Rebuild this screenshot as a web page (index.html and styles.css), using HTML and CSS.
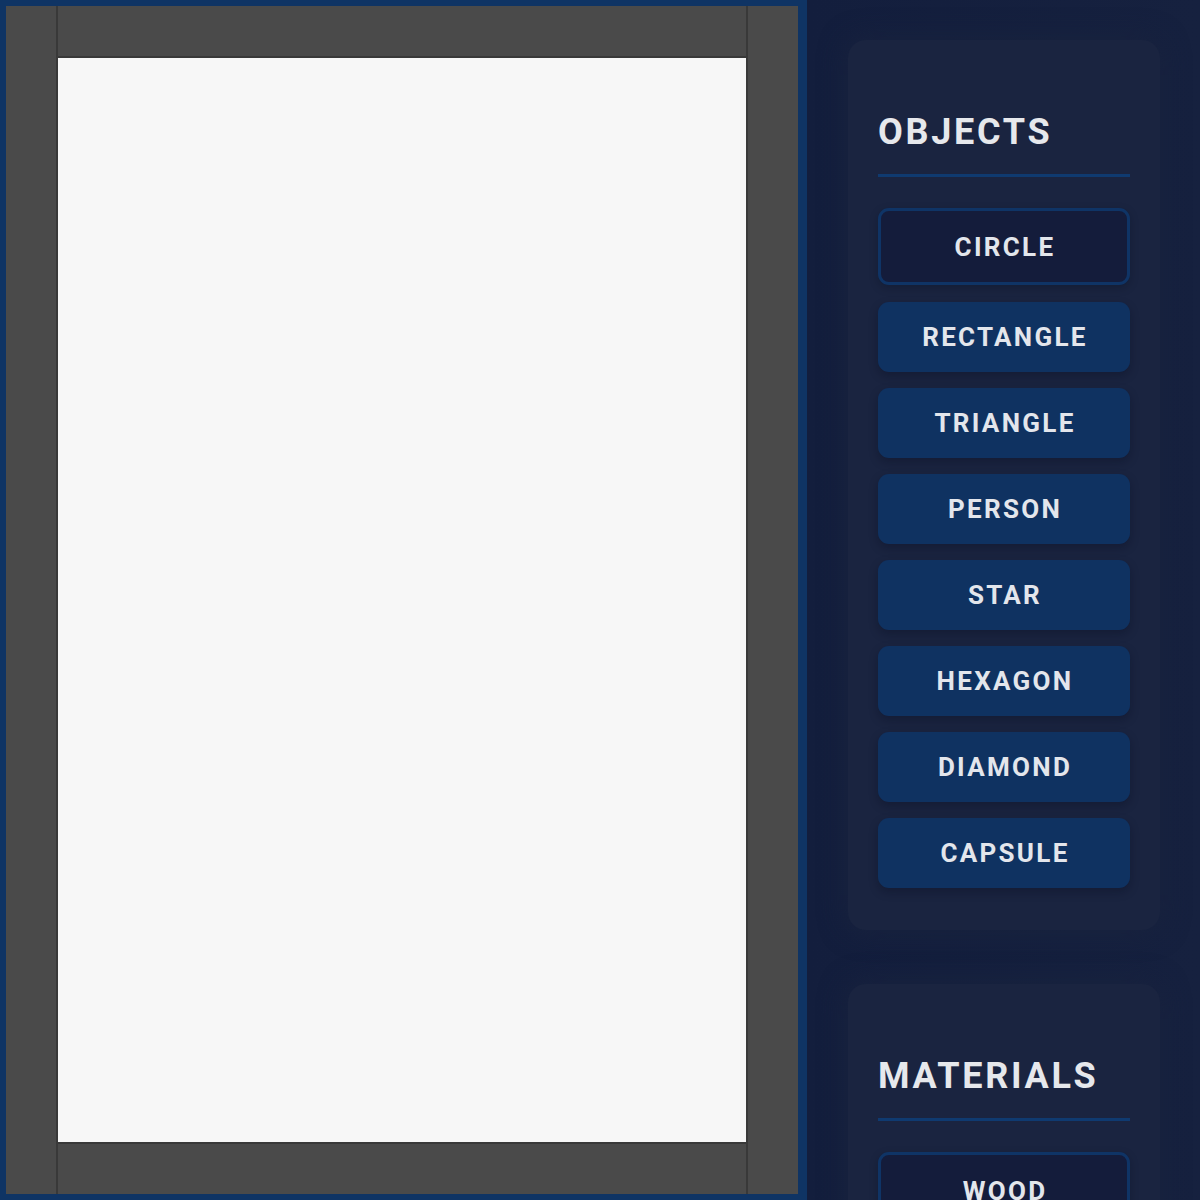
FILE: index.html
```html
<!DOCTYPE html>
<html lang="en">
<head>
<meta charset="utf-8">
<title>Shape Builder</title>
<link rel="stylesheet" href="styles.css">
</head>
<body>
<div class="app">
  <main class="stage">
    <div class="gutter"></div>
    <div class="center">
      <div class="bar"></div>
      <div class="canvas"></div>
      <div class="bar"></div>
    </div>
    <div class="gutter"></div>
  </main>
  <aside class="sidebar">
    <section class="card">
      <h2 class="card-title">OBJECTS</h2>
      <div class="btn-list">
        <button class="btn active">CIRCLE</button>
        <button class="btn">RECTANGLE</button>
        <button class="btn">TRIANGLE</button>
        <button class="btn">PERSON</button>
        <button class="btn">STAR</button>
        <button class="btn">HEXAGON</button>
        <button class="btn">DIAMOND</button>
        <button class="btn">CAPSULE</button>
      </div>
    </section>
    <section class="card">
      <h2 class="card-title">MATERIALS</h2>
      <div class="btn-list">
        <button class="btn active">WOOD</button>
        <button class="btn">METAL</button>
        <button class="btn">RUBBER</button>
      </div>
    </section>
  </aside>
</div>
</body>
</html>
```
FILE: styles.css
```css
* { box-sizing: border-box; }
html, body {
  margin: 0;
  padding: 0;
  height: 100%;
  overflow: hidden;
  background: #15203f;
  font-family: Roboto, "Liberation Sans", sans-serif;
}
.app {
  display: flex;
  height: 1200px;
}
.stage {
  width: 804px;
  flex: none;
  border: 6px solid #0f3464;
  background: #4a4a4a;
  display: flex;
}
.gutter {
  width: 50px;
  flex: none;
}
.center {
  flex: 1;
  display: flex;
  flex-direction: column;
  border-left: 2px solid #393939;
  border-right: 2px solid #393939;
}
.bar {
  height: 50px;
  flex: none;
}
.canvas {
  flex: 1;
  background: #f7f7f7;
  border-top: 2px solid #393939;
  border-bottom: 2px solid #393939;
}
.sidebar {
  flex: 1;
  border-left: 3px solid #0f3464;
  background: linear-gradient(90deg, #131e3d 0%, #16213f 100%);
  padding: 40px 40px 0 41px;
  display: flex;
  flex-direction: column;
  gap: 54px;
}
.card {
  flex: none;
  background: #1a2440;
  border-radius: 18px;
  box-shadow: 0 0 24px 4px rgba(24, 34, 62, 0.9);
  padding: 71px 30px 42px 30px;
}
.card-title {
  margin: 0 0 31px 0;
  font-size: 36px;
  line-height: 42px;
  font-weight: 700;
  letter-spacing: 2.7px;
  color: #e6e8ec;
  padding-bottom: 21px;
  border-bottom: 3px solid #0f3a70;
}
.btn-list {
  display: flex;
  flex-direction: column;
  gap: 16px;
}
.btn {
  height: 70px;
  border: none;
  border-radius: 11px;
  background: #0f3261;
  color: #e3e6ec;
  font-family: Roboto, "Liberation Sans", sans-serif;
  font-size: 26px;
  font-weight: 700;
  letter-spacing: 2.3px;
  padding: 0 0 0 2px;
  box-shadow: 0 4px 10px rgba(5, 10, 25, 0.3);
}
.btn.active {
  height: 77px;
  margin-bottom: 1px;
  background: #141c3b;
  border: 3px solid #0f3466;
  box-shadow: 0 3px 8px rgba(5, 10, 25, 0.25);
}
```
